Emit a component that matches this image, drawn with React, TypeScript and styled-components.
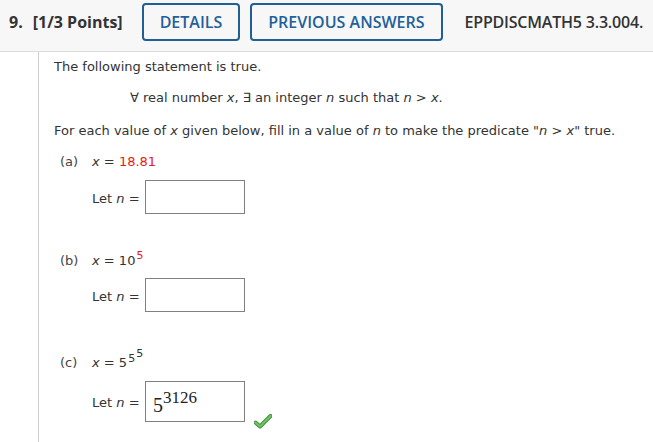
import styled, { createGlobalStyle } from 'styled-components';

const GlobalStyle = createGlobalStyle`
  html, body {
    margin: 0;
    padding: 0;
    background: #fff;
  }
  body {
    font-family: "DejaVu Sans", Verdana, sans-serif;
    color: #333;
  }
`;

const Page = styled.div`
  width: 653px;
  height: 442px;
  overflow: hidden;
  display: flex;
  flex-direction: column;
`;

// 上部の見出しバー
const Header = styled.div`
  height: 48px;
  flex-shrink: 0;
  display: flex;
  align-items: flex-start;
  padding: 3px 0 0 9px;
  background: #f7f7f7;
  border-bottom: 1px solid #dcdcdc;
  font-family: "Open Sans", "Liberation Sans", sans-serif;
  font-size: 16px;
  font-weight: 700;
  color: #333;
  white-space: nowrap;
`;

const Title = styled.div`
  height: 38px;
  display: flex;
  align-items: center;
  gap: 10px;
  margin-right: 19px;
`;

const HeaderButton = styled.button`
  height: 38px;
  padding: 0 16px;
  margin-right: ${p => p.$gap ?? 10}px;
  background: #f7f7f7;
  border: 2px solid #1f5f94;
  border-radius: 4px;
  font-family: "Open Sans", "Liberation Sans", sans-serif;
  font-size: 16px;
  font-weight: 600;
  color: #22609a;
  cursor: pointer;
`;

const Code = styled.div`
  height: 38px;
  display: flex;
  align-items: center;
  font-weight: 600;
  letter-spacing: -0.2px;
`;

const Body = styled.div`
  flex: 1;
  display: flex;
`;

const Gutter = styled.div`
  width: 38px;
  flex-shrink: 0;
  border-right: 1px solid #cfcfcf;
`;

const Content = styled.div`
  padding: 7px 0 0 15px;
  font-size: 13px;
  line-height: 16px;
`;

const Para = styled.div`
  margin-top: ${p => p.$top ?? 0}px;
  padding-left: ${p => p.$indent ?? 0}px;
  white-space: nowrap;
`;

const Var = styled.i`
  font-style: italic;
`;

const Part = styled.div`
  margin-top: ${p => p.$top}px;
  display: flex;
  align-items: baseline;
  padding-left: 6px;
  white-space: nowrap;
`;

const PartLabel = styled.span`
  width: 32px;
  color: #444;
`;

const Red = styled.span`
  color: #e8191b;
`;

const Sup = styled.sup`
  position: relative;
  top: ${p => p.$raise ?? -6}px;
  vertical-align: baseline;
  font-size: ${p => p.$size ?? 10}px;
  line-height: 0;
  margin-left: 1px;
`;

const AnswerRow = styled.div`
  margin-top: ${p => p.$top ?? 10}px;
  padding-left: 38px;
  display: flex;
  align-items: flex-end;
  white-space: nowrap;
`;

const AnswerLabel = styled.span`
  width: 53px;
  align-self: center;
  margin-top: 3px;
`;

const AnswerBox = styled.div`
  width: 100px;
  height: ${p => p.$h ?? 34}px;
  box-sizing: border-box;
  border: 1px solid #808080;
  background: #fff;
  font-family: "Liberation Serif", "Times New Roman", serif;
  color: #222;
  display: flex;
  align-items: flex-end;
  padding: 0 0 0 7px;
`;

const MathBase = styled.span`
  font-size: 20px;
  line-height: 20px;
  margin-bottom: 6px;
`;

const MathSup = styled.span`
  font-size: 17px;
  line-height: 17px;
  position: relative;
  top: -8px;
  margin-bottom: 7px;
`;

const Check = styled.svg`
  margin: 0 0 -7px 9px;
`;

const CheckMark = () => (
  <Check width="18" height="15" viewBox="0 0 18 15">
    <path d="M1.5 8.5 L6 12.5 L16.5 2" fill="none" stroke="#3f8f3a" strokeWidth="4" strokeLinecap="round" strokeLinejoin="round" />
    <path d="M1.5 8.5 L6 12.5 L16.5 2" fill="none" stroke="#72c163" strokeWidth="2.2" strokeLinecap="round" strokeLinejoin="round" />
  </Check>
);

export default function App() {
  return (
    <Page>
      <GlobalStyle />
      <Header>
        <Title>
          <span>9.</span>
          <span>[1/3 Points]</span>
        </Title>
        <HeaderButton>DETAILS</HeaderButton>
        <HeaderButton $gap={22}>PREVIOUS ANSWERS</HeaderButton>
        <Code>EPPDISCMATH5 3.3.004.</Code>
      </Header>
      <Body>
        <Gutter />
        <Content>
          <Para>The following statement is true.</Para>
          <Para $top={15} $indent={76}>
            ∀ real number <Var>x</Var>, ∃ an integer <Var>n</Var> such that <Var>n</Var> &gt; <Var>x</Var>.
          </Para>
          <Para $top={17}>
            For each value of <Var>x</Var> given below, fill in a value of <Var>n</Var> to make the predicate "<Var>n</Var> &gt; <Var>x</Var>" true.
          </Para>

          <Part $top={15}>
            <PartLabel>(a)</PartLabel>
            <span>
              <Var>x</Var> = <Red>18.81</Red>
            </span>
          </Part>
          <AnswerRow $top={10}>
            <AnswerLabel>
              Let <Var>n</Var> =
            </AnswerLabel>
            <AnswerBox />
          </AnswerRow>

          <Part $top={39}>
            <PartLabel>(b)</PartLabel>
            <span>
              <Var>x</Var> = 10
              <Sup $size={11} $raise={-6}>
                <Red>5</Red>
              </Sup>
            </span>
          </Part>
          <AnswerRow $top={9}>
            <AnswerLabel>
              Let <Var>n</Var> =
            </AnswerLabel>
            <AnswerBox />
          </AnswerRow>

          <Part $top={43}>
            <PartLabel>(c)</PartLabel>
            <span>
              <Var>x</Var> = 5
              <Sup $size={11} $raise={-5}>
                5<Sup $size={11} $raise={-5}>5</Sup>
              </Sup>
            </span>
          </Part>
          <AnswerRow $top={10}>
            <AnswerLabel>
              Let <Var>n</Var> =
            </AnswerLabel>
            <AnswerBox $h={41}>
              <MathBase>5</MathBase>
              <MathSup>3126</MathSup>
            </AnswerBox>
            <CheckMark />
          </AnswerRow>
        </Content>
      </Body>
    </Page>
  );
}
